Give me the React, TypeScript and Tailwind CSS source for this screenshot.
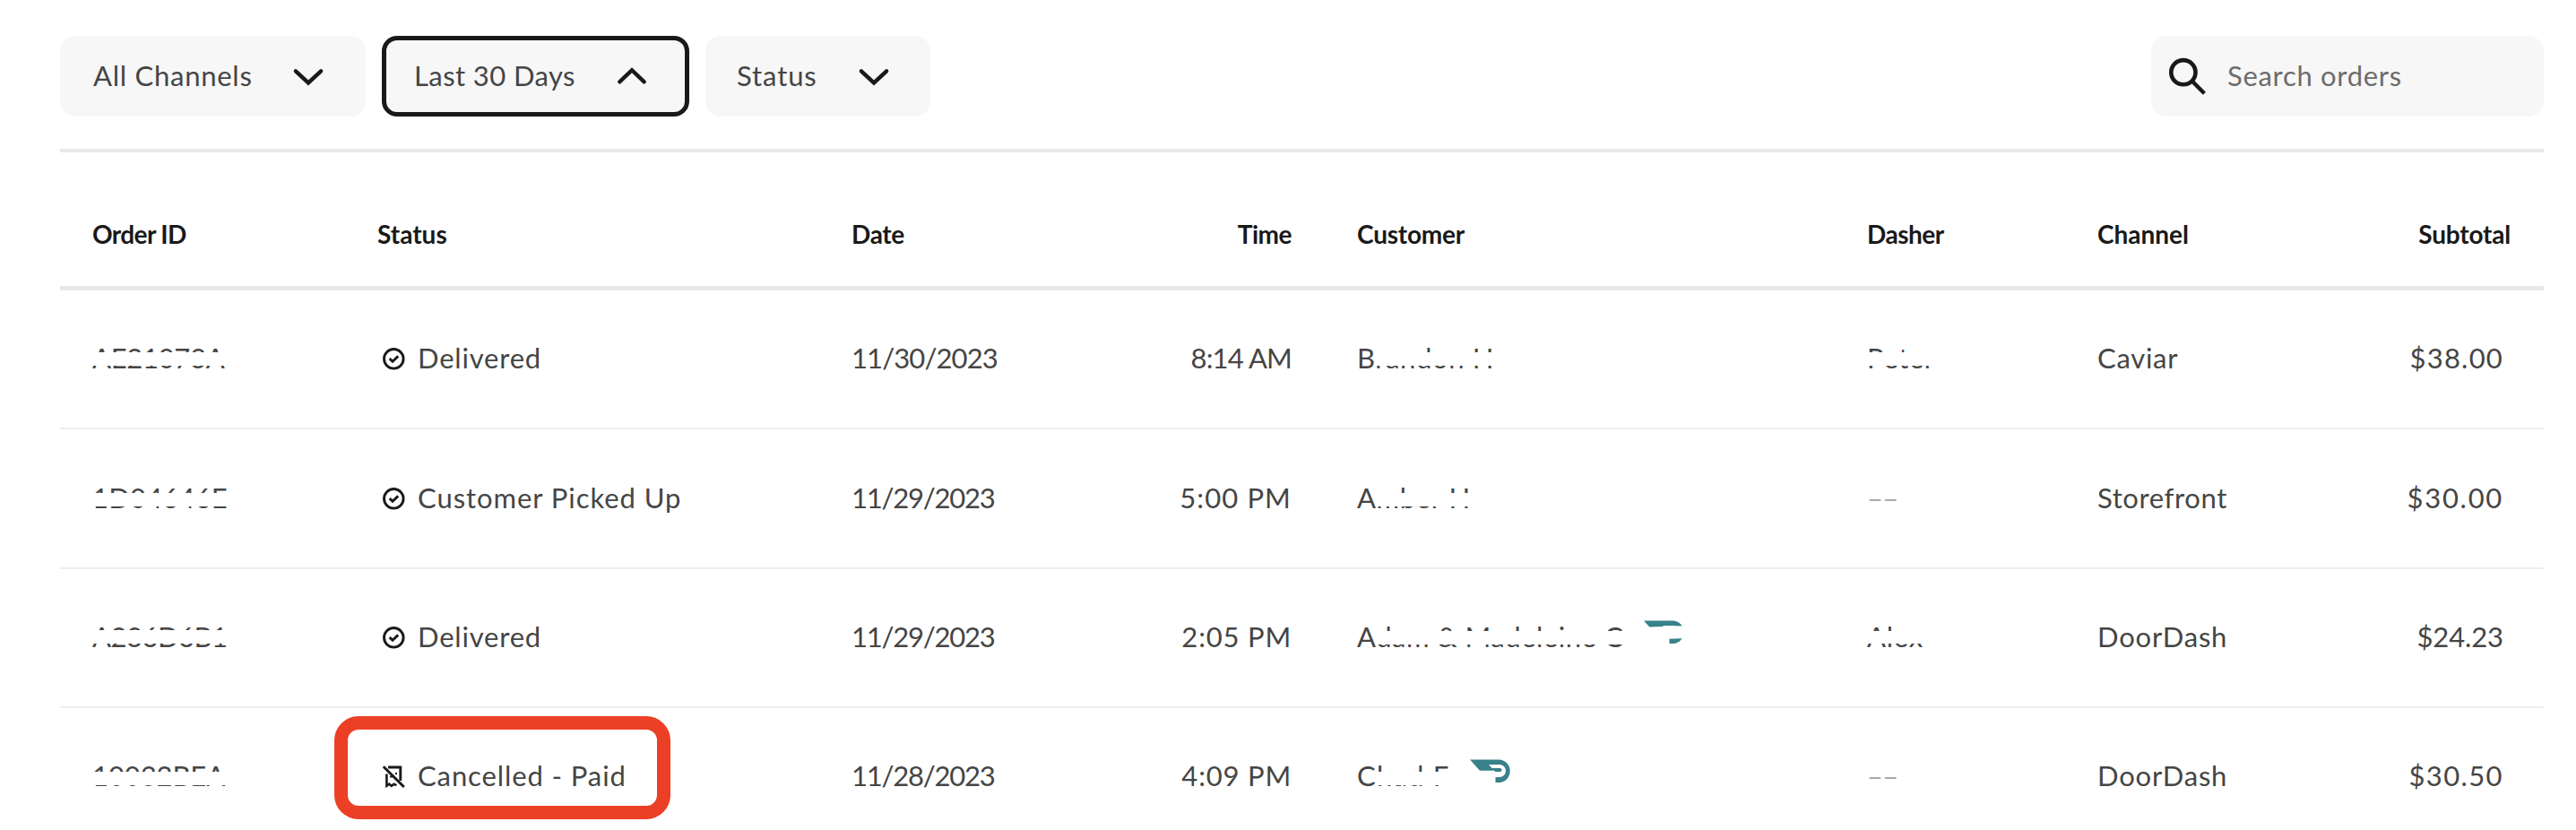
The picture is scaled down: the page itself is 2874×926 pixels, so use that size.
import React from 'react';

interface Masked {
  text: string;
  tracking: string;
  mask: string;
}

interface Order {
  id: Masked;
  status: string;
  statusTracking: string;
  cancelled?: boolean;
  date: string;
  dateTracking: string;
  time: string;
  timeTracking: string;
  customer: Masked;
  dashPass?: boolean;
  logoMask?: string;
  dasher?: Masked;
  channel: string;
  channelTracking: string;
  subtotal: string;
  subtotalTracking: string;
  row: string;
}

const orders: Order[] = [
  {
    id: { text: 'AE21073A', tracking: 'tracking-[-0.3px]', mask: 'left-0 top-[14px] h-[15px]' },
    status: 'Delivered',
    statusTracking: 'tracking-[0.8px]',
    date: '11/30/2023',
    dateTracking: 'tracking-[-0.9px]',
    time: '8:14 AM',
    timeTracking: 'tracking-[-0.85px]',
    customer: { text: 'Brandon H', tracking: 'tracking-[0.65px]', mask: 'left-[20px] top-[14px] h-[15px]' },
    dasher: { text: 'Peter', tracking: 'tracking-[0.6px]', mask: 'left-0 top-[14px] h-[15px]' },
    channel: 'Caviar',
    channelTracking: 'tracking-[0.7px]',
    subtotal: '$38.00',
    subtotalTracking: 'tracking-[1.2px]',
    row: 'h-[155px] pt-[55px] border-b-2',
  },
  {
    id: { text: '1D04646E', tracking: 'tracking-[0.2px]', mask: 'left-0 top-[15px] h-[15px]' },
    status: 'Customer Picked Up',
    statusTracking: 'tracking-[0.95px]',
    date: '11/29/2023',
    dateTracking: 'tracking-[-1.25px]',
    time: '5:00 PM',
    timeTracking: 'tracking-[1.1px]',
    customer: { text: 'Amber H', tracking: 'tracking-[0.65px]', mask: 'left-[21px] top-[15px] h-[15px]' },
    channel: 'Storefront',
    channelTracking: 'tracking-[0.6px]',
    subtotal: '$30.00',
    subtotalTracking: 'tracking-[1.7px]',
    row: 'h-[156px] pt-[56px] border-b-2',
  },
  {
    id: { text: 'A236D6B1', tracking: 'tracking-[-0.5px]', mask: 'left-0 top-[13px] h-[15px]' },
    status: 'Delivered',
    statusTracking: 'tracking-[0.8px]',
    date: '11/29/2023',
    dateTracking: 'tracking-[-1.25px]',
    time: '2:05 PM',
    timeTracking: 'tracking-[0.8px]',
    customer: { text: 'Adam & Madeleine C', tracking: 'tracking-[0.52px]', mask: 'left-[21px] top-[14px] h-[15px]' },
    dashPass: true,
    logoMask: 'top-[7px] h-[14px] -rotate-2',
    dasher: { text: 'Alex', tracking: 'tracking-[0.8px]', mask: 'left-0 top-[14px] h-[14px]' },
    channel: 'DoorDash',
    channelTracking: 'tracking-[0.8px]',
    subtotal: '$24.23',
    subtotalTracking: 'tracking-[-0.1px]',
    row: 'h-[155px] pt-[55px] border-b-2',
  },
  {
    id: { text: '10032BEA', tracking: 'tracking-[-0.1px]', mask: 'left-0 top-[16px] h-[15px]' },
    status: 'Cancelled - Paid',
    statusTracking: 'tracking-[0.9px]',
    cancelled: true,
    date: '11/28/2023',
    dateTracking: 'tracking-[-1.25px]',
    time: '4:09 PM',
    timeTracking: 'tracking-[0.8px]',
    customer: { text: 'Chad F', tracking: 'tracking-[1.2px]', mask: 'left-[21px] top-[16px] h-[15px]' },
    dashPass: true,
    channel: 'DoorDash',
    channelTracking: 'tracking-[0.8px]',
    subtotal: '$30.50',
    subtotalTracking: 'tracking-[1.4px]',
    row: 'h-[136px] pt-[55px]',
  },
];

function Chevron({ up }: { up?: boolean }) {
  return (
    <svg width="36" height="36" viewBox="0 0 36 36" fill="none" stroke="#191919" strokeWidth="4.4" strokeLinecap="round">
      <path d={up ? 'M4.3 25.3 18 12.2l13.7 13.1' : 'M3.9 13.3 18 26.4l14.1-13.1'} />
    </svg>
  );
}

function SearchIcon() {
  return (
    <svg width="48" height="48" viewBox="0 0 48 48" fill="none" stroke="#191919">
      <circle cx="19.9" cy="19.7" r="13.6" strokeWidth="4.6" />
      <path d="M29.6 29.4 43.4 43.2" strokeWidth="4.4" />
    </svg>
  );
}

function CheckCircle() {
  return (
    <svg className="mt-[9px]" width="25" height="25" viewBox="0 0 25 25" fill="none" stroke="#191919">
      <circle cx="12.3" cy="12.3" r="10.8" strokeWidth="2.9" />
      <path d="M7.6 12.2 11 15.2l6.2-5.8" strokeWidth="2.9" />
    </svg>
  );
}

function ReceiptOff() {
  return (
    <svg className="mt-[9px]" width="25" height="25" viewBox="0 0 25 25" fill="none" stroke="#191919" strokeWidth="2.4">
      <path d="M6 2h13.8v15" strokeWidth="2.9" />
      <path d="M4.4 9.5v13.2l2.8-2 2.6 2.2 2.6-2.2 3 1.4" strokeWidth="2.6" />
      <path d="M8 12.5h3M14 9h2" strokeWidth="2" />
      <path d="M.8 1.2 23.8 24" strokeWidth="2.9" />
    </svg>
  );
}

function DashPassLogo() {
  return (
    <svg width="46" height="27" viewBox="0 0 46 27" fill="#37818a">
      <path d="M0 .5H33A12.8 12.8 0 0 1 33 26H28.5V20H33A7 7 0 0 0 33 6H21L24.5 10H33.5A2 2 0 0 1 33.5 14H28.5L27 12.8H11Z" />
    </svg>
  );
}

function MaskedText({ value }: { value: Masked }) {
  return (
    <span className={`relative inline-block whitespace-nowrap ${value.tracking}`}>
      {value.text}
      <span className={`absolute right-[-4px] bg-white ${value.mask}`} />
    </span>
  );
}

const columns = 'grid grid-cols-[318px_529px_246px_245px_642px_257px_1fr] pl-[36px] pr-[37px]';

export default function App() {
  return (
    <div className="h-[926px] w-[2874px] overflow-hidden bg-white pl-[67px] pr-9 pt-10 font-['Lato','Liberation_Sans',sans-serif] text-[31px] leading-[40px] text-[#454545]">
      <div className="flex h-[90px] justify-between">
        <div className="flex">
          <button className="flex w-[341px] items-center justify-between rounded-[17px] bg-[#f7f7f7] pb-[2px] pl-[37px] pr-[46px]">
            <span className="tracking-[0.75px]">All Channels</span>
            <Chevron />
          </button>
          <button className="ml-[18px] flex w-[343px] items-center justify-between rounded-[17px] border-[5px] border-[#191919] bg-[#f7f7f7] pb-[2px] pl-[31px] pr-[41px]">
            <span className="tracking-[0.4px]">Last 30 Days</span>
            <Chevron up />
          </button>
          <button className="ml-[18px] flex w-[251px] items-center justify-between rounded-[17px] bg-[#f7f7f7] pb-[2px] pl-[35px] pr-[45px]">
            <span className="tracking-[0.9px]">Status</span>
            <Chevron />
          </button>
        </div>
        <div className="flex w-[438px] items-center gap-[21px] rounded-[17px] bg-[#f7f7f7] pl-4">
          <SearchIcon />
          <span className="pb-[2px] tracking-[0.7px] text-[#6c6c6c]">Search orders</span>
        </div>
      </div>

      <div className="mt-9 h-1 bg-[#e9e9e9]" />

      <div className={`${columns} h-[154px] border-b-[5px] border-[#e8e8e8] pt-[73px] text-[28px] font-bold leading-[36px] text-[#191919]`}>
        <span className="tracking-[-0.6px]">Order ID</span>
        <span>Status</span>
        <span className="tracking-[-0.3px]">Date</span>
        <span className="text-right tracking-[-0.5px]">Time</span>
        <span className="pl-[73px] tracking-[-0.2px]">Customer</span>
        <span className="tracking-[-0.5px]">Dasher</span>
        <div className="flex justify-between">
          <span>Channel</span>
          <span className="tracking-[-0.2px]">Subtotal</span>
        </div>
      </div>

      {orders.map((order) => (
        <div key={order.id.text} className={`${columns} border-[#eeeeee] ${order.row}`}>
          <div>
            <MaskedText value={order.id} />
          </div>
          <div className="relative flex items-start gap-[14px] pl-[6px]">
            {order.cancelled ? <ReceiptOff /> : <CheckCircle />}
            <span className={order.statusTracking}>{order.status}</span>
            {order.cancelled && (
              <div className="absolute -left-[48px] -top-[46px] h-[115px] w-[375px] rounded-[27px] border-[15px] border-[#eb4026]" />
            )}
          </div>
          <span className={order.dateTracking}>{order.date}</span>
          <span className={`text-right ${order.timeTracking}`}>{order.time}</span>
          <div className="flex items-start gap-[23px] pl-[73px]">
            <MaskedText value={order.customer} />
            {order.dashPass && (
              <div className="relative mt-[2px]">
                <DashPassLogo />
                {order.logoMask && <span className={`absolute -left-2 w-[58px] bg-white ${order.logoMask}`} />}
              </div>
            )}
          </div>
          <div>
            {order.dasher ? (
              <MaskedText value={order.dasher} />
            ) : (
              <span className="tracking-[-0.8px] text-[#a8a8a8]">––</span>
            )}
          </div>
          <div className="flex justify-between pr-[8px]">
            <span className={order.channelTracking}>{order.channel}</span>
            <span className={order.subtotalTracking}>{order.subtotal}</span>
          </div>
        </div>
      ))}
    </div>
  );
}
